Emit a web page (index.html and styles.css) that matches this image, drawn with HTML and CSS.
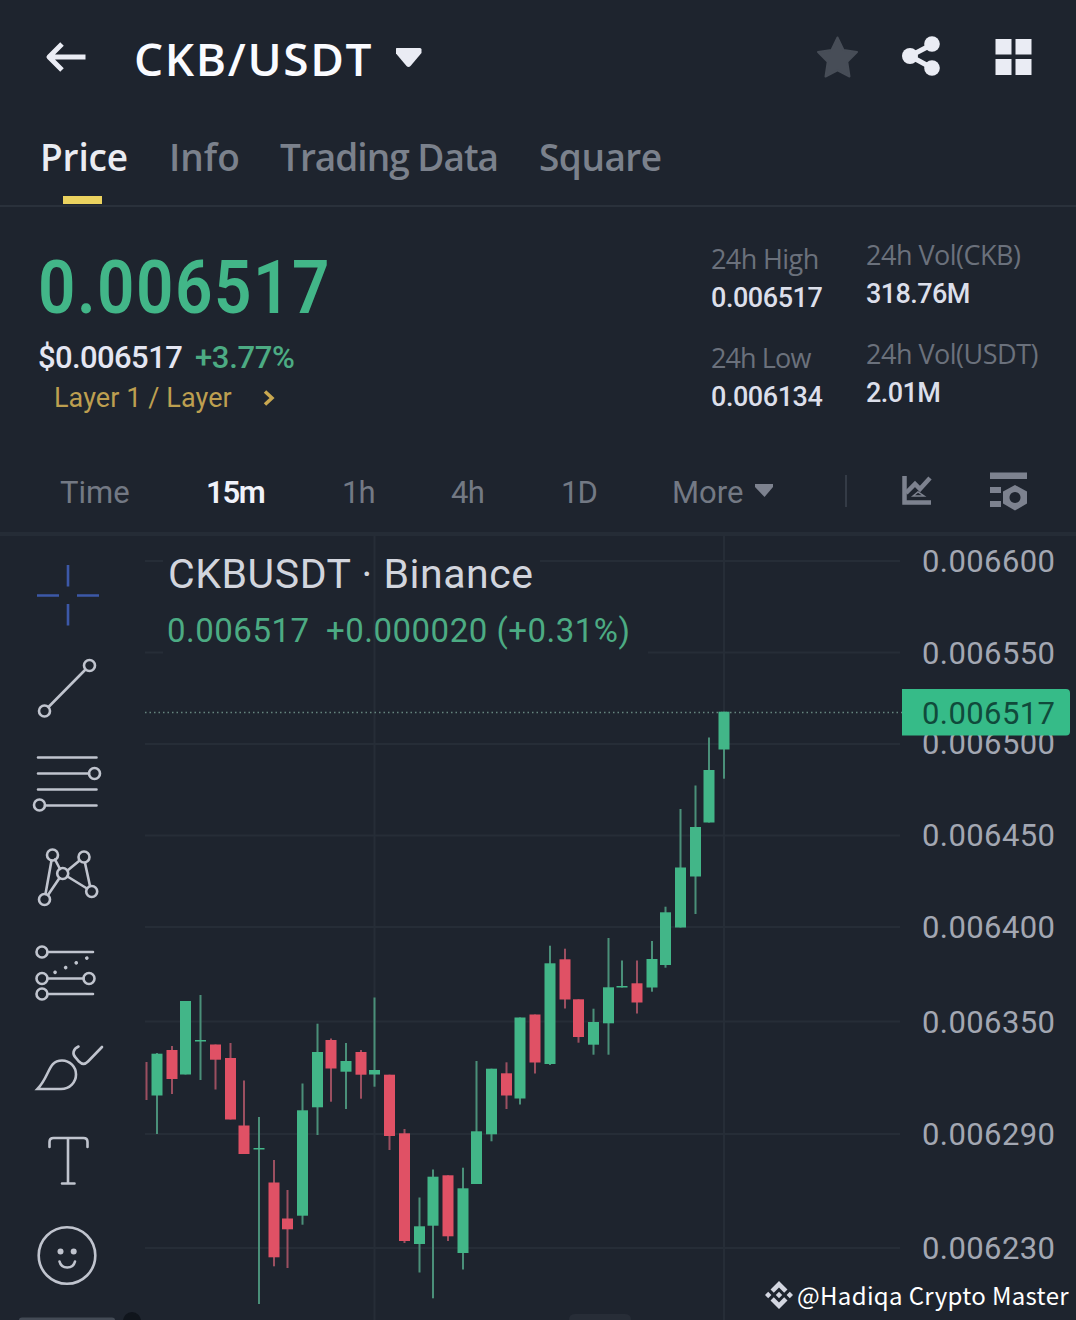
FILE: index.html
```html
<!DOCTYPE html>
<html lang="en">
<head>
<meta charset="utf-8">
<title>CKB/USDT</title>
<link rel="stylesheet" href="styles.css">
</head>
<body>
<header class="topbar">
  <svg class="back" width="44" height="36" viewBox="44 39 44 36"><path d="M85.500 57H50M62 44 49 57l13 13"/></svg>
  <h1 class="pair">CKB/USDT</h1>
  <svg class="caret" width="26" height="20" viewBox="396 48 26 20"><path d="M397 48h23q1.500 0 1.500 1.500V53l-11 13q-2 2-4 0l-11-13v-3.500Q395.500 48 397 48z"/></svg>
  <div class="actions">
    <svg width="44" height="44" viewBox="816 36 44 44"><path class="star" d="M837.500 38.500l6 12.500 13.500 2-9.700 9.800 2.200 14.700-12-6.200-12 6.200 2.200-14.700-9.700-9.800 13.500-2z"/></svg>
    <svg width="40" height="44" viewBox="901 36 40 44"><path class="share-line" d="M932 45.500 910 57l22 12"/><g class="light"><circle cx="910" cy="57" r="8"/><circle cx="932" cy="45" r="7.800"/><circle cx="932" cy="69" r="7.800"/></g></svg>
    <svg width="38" height="44" viewBox="995 35 38 44"><path class="light" d="M995.500 39h16v15.500h-16zM1015.500 39h16v15.500h-16zM995.500 59h16v16h-16zM1015.500 59h16v16h-16z"/></svg>
  </div>
</header>
<nav class="tabs">
  <a class="tab tab-price active">Price</a>
  <a class="tab tab-info">Info</a>
  <a class="tab tab-data">Trading Data</a>
  <a class="tab tab-square">Square</a>
</nav>
<section class="summary">
  <div class="quote">
    <div class="last">0.006517</div>
    <div class="change"><span class="usd">$0.006517</span><span class="pct">+3.77%</span></div>
    <div class="tag"><span>Layer 1 / Layer</span><svg width="12" height="18" viewBox="263 389 12 18"><path d="M265 391.500l7 6.500-7 6.500"/></svg></div>
  </div>
  <dl class="stats stats-range">
    <dt>24h High</dt><dd>0.006517</dd>
    <dt class="low">24h Low</dt><dd>0.006134</dd>
  </dl>
  <dl class="stats stats-volume">
    <dt>24h Vol(CKB)</dt><dd>318.76M</dd>
    <dt>24h Vol(USDT)</dt><dd>2.01M</dd>
  </dl>
</section>
<nav class="intervals">
  <a class="iv-time">Time</a><a class="iv-15m active">15m</a><a class="iv-1h">1h</a><a class="iv-4h">4h</a><a class="iv-1d">1D</a><a class="iv-more">More</a>
  <svg width="321" height="48" viewBox="755 468 321 48">
    <path class="muted" d="M755 484h18v3l-8.500 10L755 487z"/>
    <path class="rule" d="M846 475v32"/>
    <g class="line"><path d="M904.500 476v26.500H931"/><path d="M906 493l9-9 5 5 10-11"/><path d="M913 496l5-4 6 4z" stroke-width="1.500"/></g>
    <g class="muted"><path d="M990 472.500h37v6.500h-37zM990 487h11v6h-11zM990 501h11v6h-11z"/><path fill-rule="evenodd" d="M1015 485l12 6.500v12l-12 7-12-7v-12zM1015 492a5.500 5.500 0 1 0 .01 0z"/></g>
  </svg>
</nav>
<main class="chart">
  <aside class="tools">
    <svg class="cross" viewBox="0 548 145 94"><path d="M37 595.500h22M77 595.500h22M68 565v21.500M68 604v21.500"/></svg>
    <svg viewBox="0 642 145 94"><path d="M48.500 707 85 670"/><circle cx="44.500" cy="711" r="5.500"/><circle cx="89.500" cy="665.500" r="5.500"/></svg>
    <svg viewBox="0 736 145 94"><path d="M38 757.500h58.500M38 773.500h51M38 789.500h58.500M45 805.500h51.500"/><circle cx="94.500" cy="773.500" r="5.500"/><circle cx="39.500" cy="805" r="5.500"/></svg>
    <svg viewBox="0 830 145 94"><path d="M51.500 860.500 45.500 894M55 859.500 60 869M67.500 870.500 79 861M85 863l5 23M67.500 876.500 87 888.500M59.500 878 48 895"/><circle cx="52.500" cy="855" r="5.500"/><circle cx="84" cy="857" r="5.500"/><circle cx="62.700" cy="873.500" r="5.500"/><circle cx="44.500" cy="899.500" r="5.500"/><circle cx="91.700" cy="891.500" r="5.500"/></svg>
    <svg viewBox="0 924 145 94"><path d="M47.500 952H93M47.500 978.500H83.500M47.500 994H93"/><path class="dots" d="M55 972.300 88 957.500"/><circle cx="42" cy="952" r="5.500"/><circle cx="42" cy="978.500" r="5.500"/><circle cx="89" cy="978.500" r="5.500"/><circle cx="42" cy="994" r="5.500"/></svg>
    <svg viewBox="0 1018 145 94"><path d="M37.500 1089C50 1076 48 1060.500 62 1060.500C70 1060.500 76 1067 76 1074.500C76 1082 70 1089 61 1089ZM78.500 1046.500C73 1049 72 1054 75.500 1057.500L79 1061.500Q83.500 1066 88 1061.500L102 1047"/></svg>
    <svg viewBox="0 1112 145 94"><path d="M49.500 1147v-5q0-4 4-4h30q4 0 4 4v5M68 1138v45.500M62 1183.500h12.500"/></svg>
    <svg viewBox="0 1206 145 94"><circle cx="67" cy="1255.500" r="28.300"/><path d="M59.500 1261.500c2 8 13.500 8 15.500 0"/><g class="eyes"><circle cx="60.500" cy="1251.500" r="3"/><circle cx="73.700" cy="1251.500" r="3"/></g></svg>
    <svg class="scroll" viewBox="0 1300 145 20"><path d="M19 1320q0-2.500 3-2.500h90q3 0 3 2.500z"/><circle cx="132" cy="1321" r="9"/></svg>
  </aside>
  <div class="plot">
    <svg width="931" height="784" viewBox="145 536 931 784">
      <path class="grid" d="M145 561h18M540 561h360M145 652.500h18M648 652.500h252M145 744h755M145 835.500h755M145 927h755M145 1021.500h755M145 1134h755M145 1248h755M374.500 536v784M724 536v784"/>
      <path class="last-line" d="M145 712.500h757"/>
      <g id="candles"></g>
      <g class="axis">
        <text x="922" y="572" textLength="133">0.006600</text>
        <text x="922" y="663.500" textLength="133">0.006550</text>
        <text x="922" y="754" textLength="133">0.006500</text>
        <text x="922" y="846" textLength="133">0.006450</text>
        <text x="922" y="938" textLength="133">0.006400</text>
        <text x="922" y="1032.500" textLength="133">0.006350</text>
        <text x="922" y="1145" textLength="133">0.006290</text>
        <text x="922" y="1259" textLength="133">0.006230</text>
      </g>
      <path class="price-tag" d="M902 689h164q4 0 4 4v38.500q0 4-4 4H902z"/>
      <text class="price-text" x="922" y="723.500" textLength="133">0.006517</text>
      <path class="handle" d="M569 1320q0-6 6-6h50q6 0 6 6z"/>
    </svg>
    <div class="legend">
      <div class="legend-title">CKBUSDT · Binance</div>
      <div class="legend-values"><span>0.006517</span><span>+0.000020 (+0.31%)</span></div>
    </div>
  </div>
</main>
<div class="credit">
  <svg width="28" height="28" viewBox="0 0 28 28"><path d="M14 0l8.500 8.500-3.300 3.300L14 6.600l-5.200 5.200-3.300-3.300zM14 28l8.500-8.500-3.300-3.300L14 21.400l-5.200-5.200-3.300 3.300zM3.200 10.800l3.200 3.200-3.200 3.200L0 14zM24.800 10.800L28 14l-3.200 3.200-3.200-3.200zM14 10.800l3.200 3.200-3.200 3.200-3.200-3.200z"/></svg>
  <span>@Hadiqa Crypto Master</span>
</div>
<script src="chart.js"></script>
</body>
</html>
```
FILE: styles.css
```css
* { box-sizing: border-box; }
body {
  margin: 0;
  width: 1076px;
  height: 1320px;
  overflow: hidden;
  position: relative;
  background: #1e242e;
  color: #eaecf2;
  font-family: Roboto, "Liberation Sans", sans-serif;
}
svg { display: block; flex: none; }

.topbar { display: flex; align-items: center; height: 114px; padding: 0 43px 0 44px; }
.back { fill: none; stroke: #eaecf4; stroke-width: 5; stroke-linejoin: round; }
.pair { margin: 1px 0 0 46px; width: 262px; font: 600 46px/60px "Open Sans", sans-serif; letter-spacing: 1.650px; color: #fafbff; white-space: nowrap; }
.caret { fill: #eaecf4; margin-top: 1px; }
.actions { display: flex; margin-left: auto; }
.actions svg + svg { margin-left: 41px; }
.actions svg + svg + svg { margin-left: 54px; }
.star { fill: #474d57; stroke: #474d57; stroke-width: 2; stroke-linejoin: round; }
.light { fill: #eaecf4; }
.share-line { fill: none; stroke: #eaecf4; stroke-width: 5; }

.tabs { display: flex; height: 93px; padding: 18px 0 0 40px; border-bottom: 2px solid #2a313b; }
.tab { position: relative; height: 73px; font: 600 37px/50px "Open Sans", sans-serif; color: #7b818c; white-space: nowrap; }
.tab.active { color: #eaecf2; }
.tab.active::after { content: ""; position: absolute; left: 23px; top: 64px; width: 39px; height: 8px; background: #ebd25f; }
.tab-price { width: 129px; letter-spacing: -0.150px; }
.tab-info { width: 111px; }
.tab-data { width: 259px; letter-spacing: -1px; }
.tab-square { letter-spacing: -0.500px; }

.summary { display: flex; height: 241px; padding-left: 38px; white-space: nowrap; }
.quote { width: 673px; padding-top: 37px; }
.last { height: 86px; font-size: 75px; line-height: 86px; font-weight: 600; letter-spacing: 1.700px; color: #42b688; transform: scaleX(0.875); transform-origin: 0 0; }
.change { display: flex; height: 42px; font-size: 31px; line-height: 42px; font-weight: 500; margin-top: 7px; }
.usd { width: 157px; letter-spacing: -0.600px; color: #e4e6f2; }
.pct { letter-spacing: -0.350px; color: #4cab83; }
.tag { display: flex; align-items: center; height: 34px; margin-top: 2px; padding-left: 16px; font-size: 27px; line-height: 34px; color: #bd9f50; }
.tag > span { width: 209px; letter-spacing: 0.080px; }
.tag svg { fill: none; stroke: #c9a850; stroke-width: 3.500; }
.stats { margin: 0; font-size: 27px; }
.stats dt { height: 39px; line-height: 39px; letter-spacing: -0.600px; color: #6b717c; font-family: "Open Sans", sans-serif; }
.stats dt.low { letter-spacing: -0.900px; }
.stats dd { margin: 0 0 21px; height: 39px; line-height: 41px; letter-spacing: -0.450px; font-weight: 500; color: #dcdfea; }
.stats-range { width: 155px; padding-top: 32px; }
.stats-volume { padding-top: 28px; }
.stats-volume dt { letter-spacing: -0.500px; }
.stats-volume dd { letter-spacing: -0.600px; }

.intervals { display: flex; height: 88px; padding: 20px 0 0 60px; border-bottom: 4px solid #252c36; font-size: 31px; line-height: 50px; color: #737984; white-space: nowrap; }
.intervals .active { color: #f0f2fa; font-weight: 600; }
.iv-time { width: 146px; }
.iv-15m { width: 136px; letter-spacing: -1.300px; }
.iv-1h { width: 109px; letter-spacing: -1px; }
.iv-4h { width: 110px; letter-spacing: -0.750px; }
.iv-1d { width: 111px; letter-spacing: -1px; }
.iv-more { width: 83px; }
.muted { fill: #7d828f; }
.intervals .rule { stroke: #343b46; stroke-width: 2; }
.intervals .line { fill: none; stroke: #7d828f; stroke-width: 4.500; }

.chart { display: grid; grid-template-columns: 145px 931px; height: 784px; }
.tools { padding-top: 12px; }
.tools svg { width: 145px; height: 94px; fill: none; stroke: #c0c4ce; stroke-width: 2.600; stroke-linecap: round; }
.tools .cross { stroke: #3c58a8; stroke-linecap: butt; }
.tools .dots { stroke-width: 3.600; stroke-dasharray: 0.100 11.500; }
.tools .eyes { fill: #c0c4ce; stroke: none; }
.tools .scroll { height: 20px; stroke: none; fill: #434a55; }
.tools .scroll circle { fill: #10151c; }
.plot { position: relative; }
.grid { fill: none; stroke: #262d37; stroke-width: 2; }
.last-line { stroke: #66857f; stroke-width: 1.500; stroke-dasharray: 1.500 3; }
.up { fill: #42b688; }
.down { fill: #e05165; }
.up-wick { fill: #4a8f79; }
.down-wick { fill: #9b4f60; }
.axis { font-size: 31px; fill: #a3a7b2; }
.price-tag { fill: #36bb88; }
.price-text { font-size: 31px; fill: #104a3b; }
.handle { fill: #272d37; }
.legend { position: absolute; left: 23px; top: 14px; white-space: nowrap; }
.legend-title { font-size: 41px; line-height: 48px; letter-spacing: 0.550px; color: #d2d5dd; }
.legend-values { display: flex; margin: 13px 0 0 -1px; font-size: 33px; line-height: 40px; letter-spacing: 0.500px; color: #4cab83; }
.legend-values > span:first-child { width: 159px; }

.credit { position: absolute; left: 765px; top: 1277px; display: flex; align-items: center; gap: 4px; height: 36px; font: 24px/36px "Noto Sans CJK SC", sans-serif; letter-spacing: 0.340px; color: #fff; white-space: nowrap; }
.credit svg { fill: #d3d6e0; }
```
FILE: chart.js
```js
// [direction, centre x, wick top, body top, body bottom, wick bottom]
const candles = [
  ["d", 146.5, 1062, 1062, 1062, 1100],
  ["u", 157, 1053, 1053.7, 1095.5, 1134],
  ["d", 172, 1046, 1050, 1079, 1094],
  ["u", 185.5, 1001, 1001, 1074.5, 1074.5],
  ["u", 200.5, 995, 1040, 1041.5, 1080],
  ["d", 215.5, 1044.5, 1044.5, 1059.7, 1089.5],
  ["d", 230.5, 1043, 1058, 1119.5, 1119.5],
  ["d", 244, 1080.5, 1125.5, 1154, 1154],
  ["u", 259, 1117, 1148, 1149.5, 1304],
  ["d", 274, 1160, 1182.5, 1257.3, 1266.3],
  ["d", 287.5, 1190, 1218.5, 1229.3, 1268],
  ["u", 302.5, 1083.5, 1110.3, 1215.7, 1224.7],
  ["u", 317.5, 1023.7, 1052, 1107.3, 1135],
  ["d", 331, 1038.5, 1040, 1068.5, 1101.7],
  ["u", 346, 1043, 1061, 1071.7, 1109],
  ["d", 361, 1050, 1052, 1074.7, 1098.7],
  ["u", 374.5, 997.5, 1070, 1074.5, 1086.7],
  ["d", 389.5, 1074.7, 1074.7, 1136, 1150],
  ["d", 404.5, 1129, 1133.3, 1241, 1243],
  ["u", 419.5, 1197.5, 1226.3, 1244, 1272.5],
  ["u", 433, 1169.5, 1176.7, 1225.7, 1298.3],
  ["d", 448, 1175.3, 1175.3, 1236.3, 1241],
  ["u", 463, 1167.7, 1188.3, 1253, 1269.5],
  ["u", 476.5, 1061, 1131.3, 1184, 1184],
  ["u", 491.5, 1068.7, 1068.7, 1134.3, 1141.3],
  ["d", 506.5, 1062.3, 1073.3, 1095.5, 1109],
  ["u", 520, 1017.5, 1017.5, 1098.5, 1104.5],
  ["d", 535, 1014.5, 1014.5, 1062.5, 1073.5],
  ["u", 550, 945.7, 963.3, 1064, 1065],
  ["d", 565, 948.7, 959.3, 999.5, 1008.5],
  ["d", 578.5, 999.3, 999.3, 1037, 1042.7],
  ["u", 593.5, 1008.7, 1022, 1044.7, 1054.7],
  ["u", 608.5, 938, 987.3, 1023.3, 1054.7],
  ["u", 622, 960.5, 986, 987.5, 987.5],
  ["d", 637, 960.5, 983.3, 1002.5, 1013.5],
  ["u", 652, 941, 959, 987.5, 991.7],
  ["u", 665.5, 906.7, 912.3, 965, 967.7],
  ["u", 680.5, 809, 867.5, 927.5, 927.5],
  ["u", 695.5, 785.5, 827, 876.5, 914],
  ["u", 709, 737.5, 770, 822.5, 822.5],
  ["u", 724, 711.7, 711.7, 749.5, 778.7]
];

const layer = document.getElementById("candles");

function rect(cls, x, y, width, height) {
  const el = document.createElementNS("http://www.w3.org/2000/svg", "rect");
  el.setAttribute("class", cls);
  el.setAttribute("x", x);
  el.setAttribute("y", y);
  el.setAttribute("width", width);
  el.setAttribute("height", height);
  layer.appendChild(el);
}

for (const [dir, x, high, top, bottom, low] of candles) {
  const name = dir === "u" ? "up" : "down";
  rect(name + "-wick", x - 1, high, 2, low - high);
  if (bottom > top) rect(name, x - 5.5, top, 11, bottom - top);
}
```
